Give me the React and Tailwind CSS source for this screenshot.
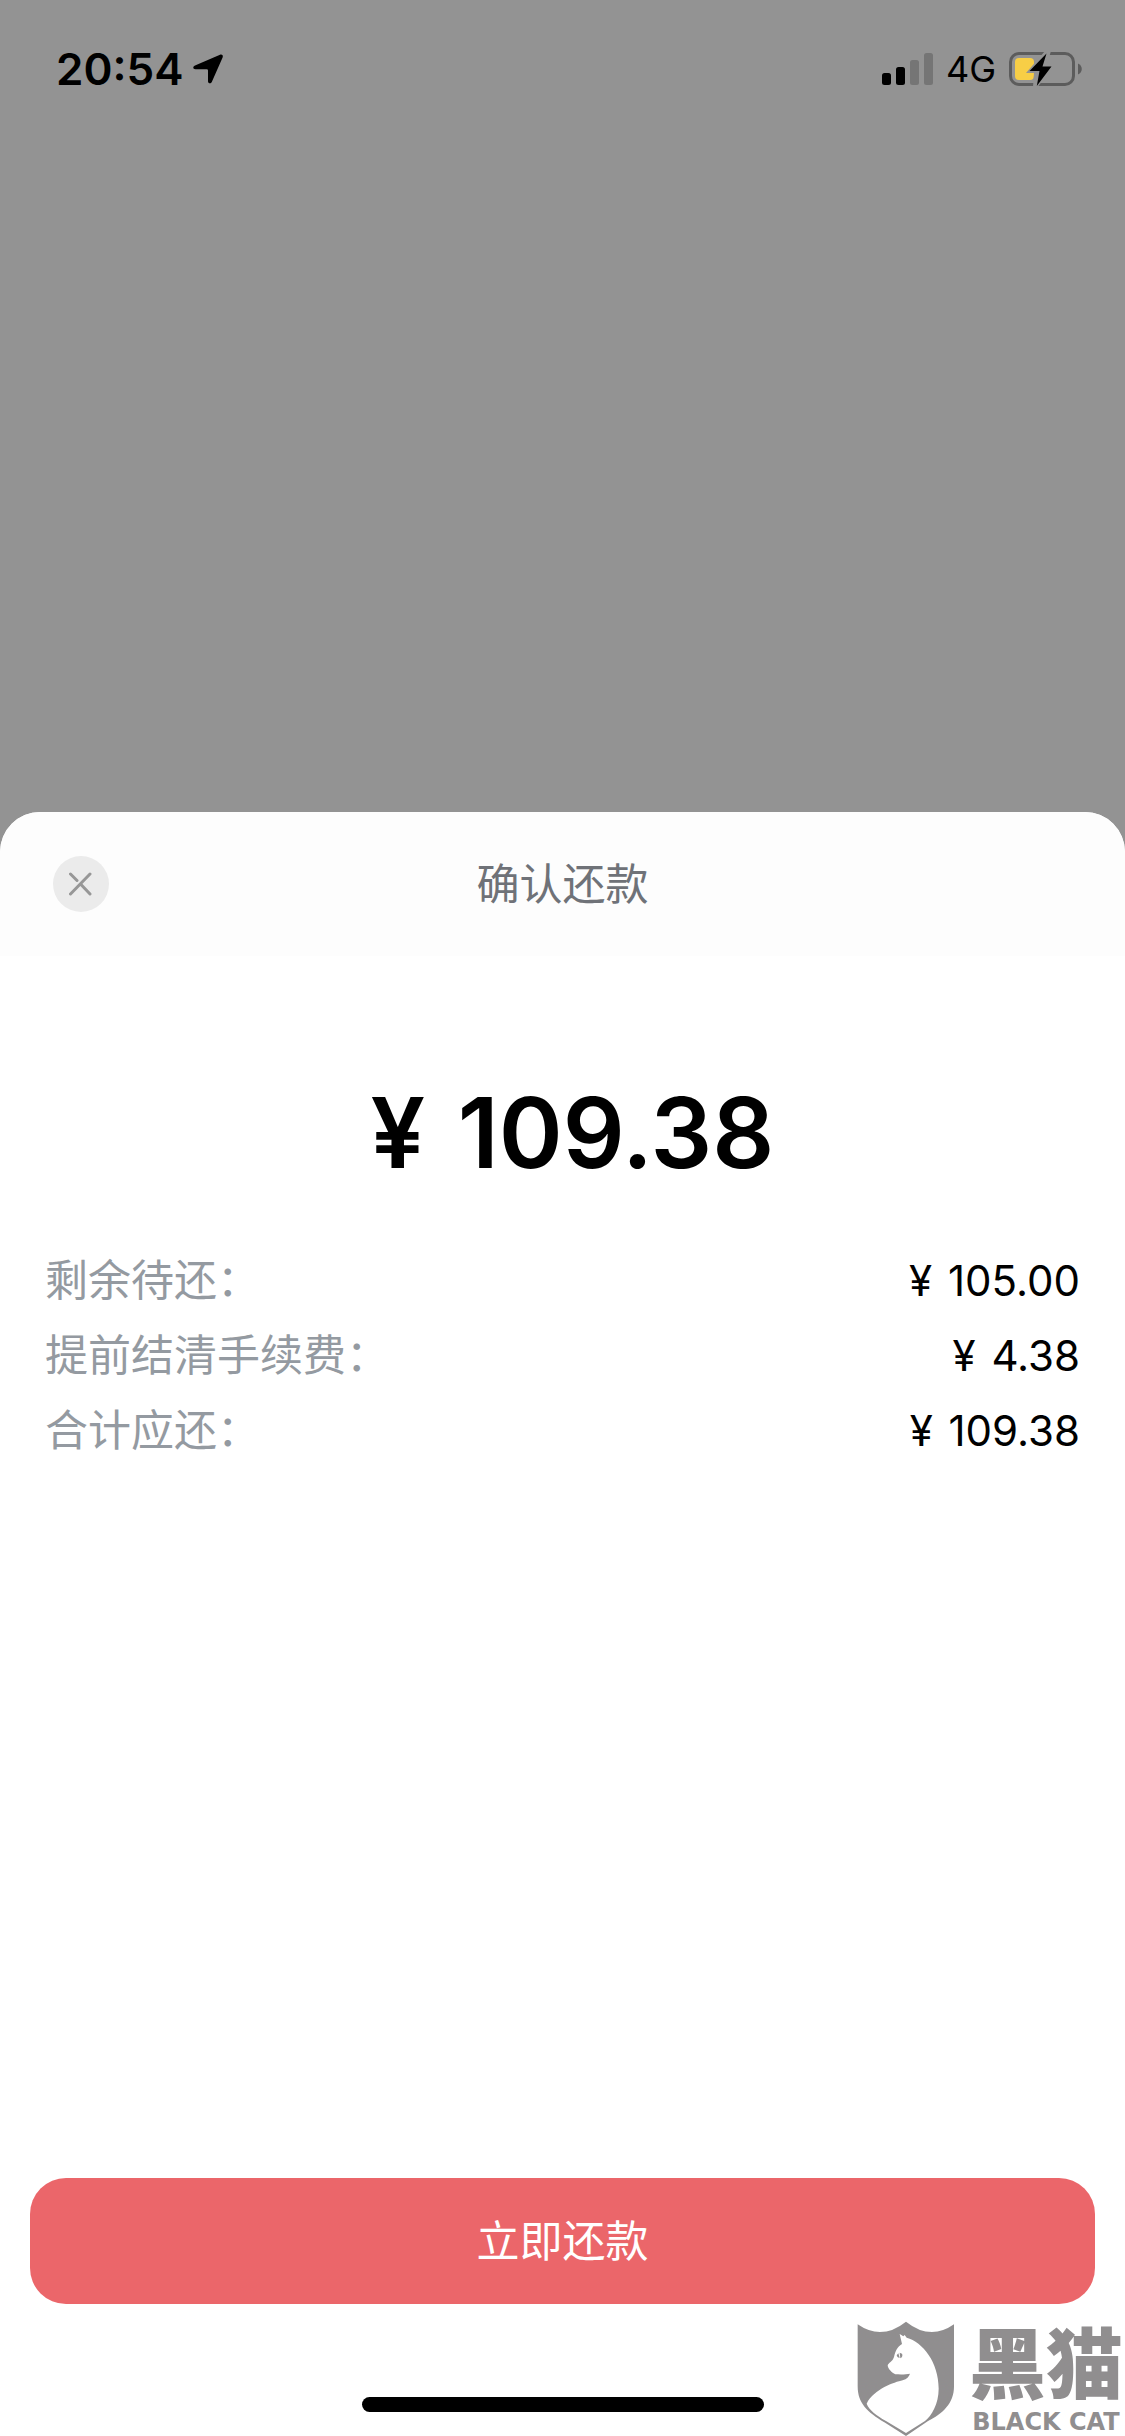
import { useState } from 'react'

const rows = [
  { label: '剩余待还：', value: '105.00' },
  { label: '提前结清手续费：', value: '4.38' },
  { label: '合计应还：', value: '109.38' },
]

function LocationArrow() {
  return (
    <svg className="w-[30px] h-[30px]" viewBox="0 0 30 30" fill="currentColor">
      <path d="M2 11.500 27 .8c2-.8 3.400.6 2.600 2.600L18.800 28c-.9 2-3.800 1.600-3.800-.8V16.400a1.200 1.200 0 0 0-1.200-1.200H2.500C-.2 15.200-.5 12.500 2 11.500Z" />
    </svg>
  )
}

function Signal() {
  return (
    <svg className="w-[51px] h-8" viewBox="0 0 51 32">
      <rect x="0" y="20" width="9" height="12" rx="2.500" />
      <rect x="14" y="14" width="9" height="18" rx="2.500" />
      <rect x="28" y="7" width="9" height="25" rx="2.500" fill="#757575" />
      <rect x="42" y="0" width="9" height="32" rx="2.500" fill="#757575" />
    </svg>
  )
}

function Battery() {
  return (
    <svg className="w-[73px] h-[36px]" viewBox="0 0 73 36">
      <rect x="1.500" y="2.500" width="63" height="31" rx="8.500" fill="none" stroke="#5c5c5c" strokeWidth="3" />
      <path d="M69 12.500c5 2 5 9 0 11Z" fill="#5c5c5c" />
      <rect x="6" y="7" width="19" height="22" rx="4" fill="#f7ce46" />
      <path d="M36 0 17 22h8L24 36h4.500L46 14.500h-8.500L42 0Z" fill="#939393" />
      <path d="M37.500 2.500 20.500 20H30.500L27.800 35 42.500 15.500h-9Z" />
    </svg>
  )
}

function StatusBar() {
  return (
    <div className="flex items-center justify-between pt-[42px] pl-[56px] pr-[43px]">
      <div className="flex items-center gap-[10px]">
        <span className="text-[44px] leading-[54px] font-semibold">20:54</span>
        <LocationArrow />
      </div>
      <div className="flex items-center gap-[13px]">
        <Signal />
        <span className="text-[36px] leading-[54px]">4G</span>
        <Battery />
      </div>
    </div>
  )
}

function BlackCat() {
  return (
    <div className="absolute right-0 bottom-0 flex items-end gap-[14px] pr-[2px] text-[#908e8f]">
      <svg className="w-[98px] h-[115px]" viewBox="48 62 294 345">
        <path fill="currentColor" d="M50 72Q122 122 195 64Q268 122 339 72V258C339 310 305 340 260 363L195 407L130 366C80 336 50 310 50 258Z" />
        <path fill="#fff" d="M176 101L187 108L191 104L197 112C245 125 293 185 293 265C293 310 272 346 252 362L195 398L135 362C105 344 85 330 77 310C100 265 160 246 185 240C198 236 204 229 207 220C195 223 175 222 163 222C152 216 142 206 140 196C142 187 155 184 159 170C163 153 168 140 183 131Z" />
        <path fill="currentColor" d="M167 165L172 159L176 172Q169 174 167 165ZM176 157L183 160Q187 168 178 174Z" />
      </svg>
      <div className="flex flex-col items-center">
        <span className="text-[77px] leading-[84px] font-black font-['Liberation_Sans','Noto_Sans_CJK_SC',sans-serif]">黑猫</span>
        <span className="text-[24px] leading-[28px] font-bold font-['DejaVu_Sans',sans-serif]">BLACK CAT</span>
      </div>
    </div>
  )
}

export default function App() {
  const [open, setOpen] = useState(true)

  return (
    <div className="relative min-h-screen grid grid-rows-[1fr_2fr] bg-[#939393] text-black font-[Inter,'Noto_Sans_CJK_SC',sans-serif]">
      <div>
        <StatusBar />
      </div>

      {open && (
        <section role="dialog" aria-labelledby="title" className="flex flex-col bg-white rounded-t-[40px] overflow-hidden">
          {/* Header */}
          <header className="grid grid-cols-[56px_1fr_56px] items-center h-36 px-[53px] bg-[#fdfdfd]">
            <button
              type="button"
              aria-label="关闭"
              onClick={() => setOpen(false)}
              className="w-14 h-14 rounded-full bg-[#ebebeb] flex items-center justify-center text-[#979797]"
            >
              <svg className="w-6 h-6" viewBox="0 0 24 24" fill="none" stroke="currentColor" strokeWidth="3" strokeLinecap="round">
                <path d="M1.500 22 21 2M1.500 2 8 8.500M11.500 12 21 22" />
              </svg>
            </button>
            <h1 id="title" className="text-center text-[43px] leading-[60px] text-[#6f7278]">确认还款</h1>
          </header>

          {/* Amount */}
          <p className="pt-[120px] pb-[53px] pl-5 text-center text-[97px] leading-[114px] font-semibold">
            <span className="mr-2">¥</span> 109.38
          </p>

          {/* Details */}
          <dl className="px-[45px]">
            {rows.map(r => (
              <div key={r.label} className="flex justify-between text-[42px] leading-[75px]">
                <dt className="text-[43px] text-[#949aa1]">{r.label}</dt>
                <dd><span className="mr-1">¥</span> {r.value}</dd>
              </div>
            ))}
          </dl>

          <div className="mt-auto px-[30px]">
            <button type="button" className="w-full h-[126px] rounded-[36px] bg-[#eb666a] text-white text-[43px]">立即还款</button>
          </div>
          <div className="mt-[93px] mb-6 mx-auto w-[402px] h-[15px] rounded-full bg-black" />
        </section>
      )}

      <BlackCat />
    </div>
  )
}
